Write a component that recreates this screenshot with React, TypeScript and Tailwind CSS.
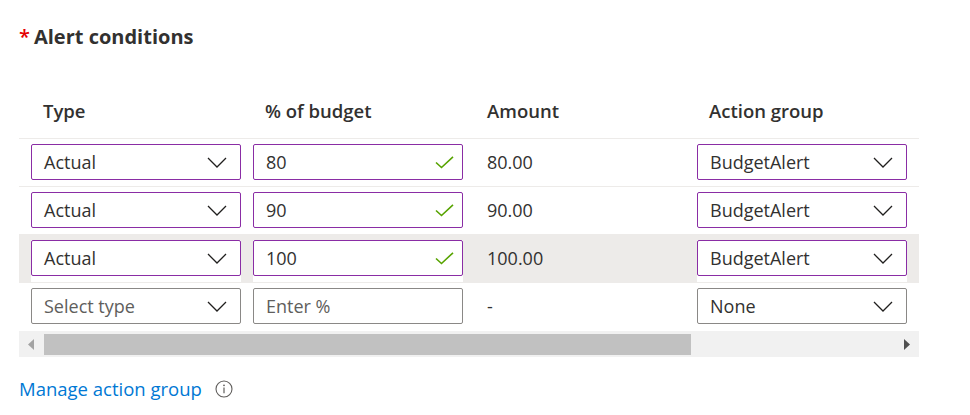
import { useState } from "react";

type Row = {
  type: string;
  percent: string;
  amount: string;
  group: string;
  filled: boolean;
};

const rows: Row[] = [
  { type: "Actual", percent: "80", amount: "80.00", group: "BudgetAlert", filled: true },
  { type: "Actual", percent: "90", amount: "90.00", group: "BudgetAlert", filled: true },
  { type: "Actual", percent: "100", amount: "100.00", group: "BudgetAlert", filled: true },
  { type: "Select type", percent: "Enter %", amount: "-", group: "None", filled: false },
];

const Chevron = () => (
  <svg width="20" height="11" viewBox="0 0 20 11" fill="none">
    <path d="M1 1 L10 10 L19 1" stroke="#201f1e" strokeWidth="1.3" />
  </svg>
);

const Check = () => (
  <svg width="19" height="13" viewBox="0 0 19 13" fill="none">
    <path d="M1 6.5 L6.5 11.5 L18 0.8" stroke="#57a300" strokeWidth="1.6" />
  </svg>
);

const Dropdown = ({ value, filled, placeholder }: { value: string; filled: boolean; placeholder?: boolean }) => (
  <div
    className={`flex h-[36px] w-[210px] items-center justify-between rounded-[2px] border pl-[12px] pr-[13px] ${
      filled ? "border-[#8a2da5]" : "border-[#8a8886]"
    }`}
  >
    <span className={placeholder ? "text-[#605e5c]" : "text-[#323130]"}>{value}</span>
    <Chevron />
  </div>
);

const PercentInput = ({ value, filled }: { value: string; filled: boolean }) => (
  <div
    className={`flex h-[36px] w-[210px] items-center justify-between rounded-[2px] border pl-[12px] pr-[8px] ${
      filled ? "border-[#8a2da5]" : "border-[#8a8886]"
    }`}
  >
    <span className={filled ? "text-[#323130]" : "text-[#605e5c]"}>{value}</span>
    {filled && <Check />}
  </div>
);

const App = () => {
  const [hovered] = useState(2);
  return (
    <div className="h-[415px] w-[970px] bg-white text-[18px] text-[#323130] [font-family:'Open_Sans',sans-serif]">
      <div className="flex items-baseline pl-[19px] pt-[22px]">
        <span className="mr-[4px] text-[20px] font-semibold text-[#e50000]">*</span>
        <h2 className="text-[20px] font-bold text-[#323130]">Alert conditions</h2>
      </div>

      <div className="ml-[19px] mt-[34px] w-[900px]">
        <div className="grid h-[53px] grid-cols-[210px_210px_210px_210px] items-center gap-x-3 border-b border-[#edebe9] px-3 pb-[3px] text-[18.5px] font-semibold">
          <span className="pl-[12px]">Type</span>
          <span className="pl-[12px]">% of budget</span>
          <span className="pl-[12px]">Amount</span>
          <span className="pl-[12px]">Action group</span>
        </div>

        {rows.map((row, i) => (
          <div
            key={i}
            className={`grid h-[48px] grid-cols-[210px_210px_210px_210px] gap-x-3 px-3 pt-[5px] ${
              i === hovered ? "bg-[#edebe9]" : "bg-white"
            } ${i < rows.length - 1 ? "border-b border-[#edebe9]" : ""}`}
          >
            <div className="bg-white">
              <Dropdown value={row.type} filled={row.filled} placeholder={!row.filled} />
            </div>
            <div className="bg-white">
              <PercentInput value={row.percent} filled={row.filled} />
            </div>
            <div className="flex h-[36px] items-center pl-[12px] text-[#323130]">{row.amount}</div>
            <div className="bg-white">
              <Dropdown value={row.group} filled={row.filled} />
            </div>
          </div>
        ))}

        {/* horizontal scroll bar under the grid */}
        <div className="flex h-[26px] items-center bg-[#f1f1f1]">
          <div className="flex w-[25px] justify-center">
            <svg width="7" height="11" viewBox="0 0 7 11">
              <path d="M6 0 L0 5.5 L6 11 Z" fill="#a3a3a3" />
            </svg>
          </div>
          <div className="h-[21px] w-[647px] bg-[#c1c1c1]" />
          <div className="flex-1" />
          <div className="flex w-[25px] justify-center">
            <svg width="7" height="11" viewBox="0 0 7 11">
              <path d="M1 0 L7 5.5 L1 11 Z" fill="#505050" />
            </svg>
          </div>
        </div>
      </div>

      <div className="mt-[18px] flex items-center pl-[19px]">
        <a href="#" className="text-[18.5px] text-[#0078d4]">
          Manage action group
        </a>
        <svg className="ml-[13px]" width="18" height="18" viewBox="0 0 18 18" fill="none">
          <circle cx="9" cy="9" r="8" stroke="#605e5c" strokeWidth="1.1" />
          <circle cx="9" cy="5.3" r="0.9" fill="#605e5c" />
          <path d="M9 7.5 V13.2" stroke="#605e5c" strokeWidth="1.2" />
        </svg>
      </div>
    </div>
  );
};

export default App;
